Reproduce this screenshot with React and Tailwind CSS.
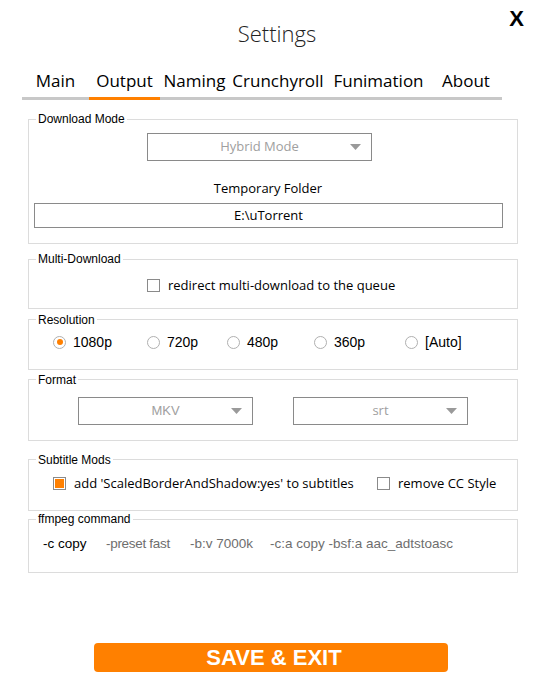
import React, { useState } from 'react';

const segoe = { fontFamily: '"Open Sans", "Noto Sans", sans-serif' };

const tabs = [
    { name: 'Main', w: 'w-[67px]' },
    { name: 'Output', w: 'w-[71px]' },
    { name: 'Naming', w: 'w-[69px]' },
    { name: 'Crunchyroll', w: 'w-[98px]' },
    { name: 'Funimation', w: 'w-[103px]' },
    { name: 'About', w: 'w-[72px]' },
];

function Group({ title, className, children }) {
    return (
        <fieldset className={`mx-[28px] border border-[#dcdcdc] px-0 ${className}`}>
            <legend className="ml-[7px] px-[2px] text-[12px] leading-[14px] text-black font-['Liberation_Sans',sans-serif]">
                {title}
            </legend>
            {children}
        </fieldset>
    );
}

function Select({ value, className, textClass = '' }) {
    return (
        <div className={`relative flex items-center justify-center border border-[#8a8a8a] bg-white ${className}`}>
            <span className={`text-[13px] text-[#a0a0a0] ${textClass}`}>{value}</span>
            <svg className="absolute right-[10px] top-1/2 -translate-y-1/2" width="11" height="6" viewBox="0 0 11 6">
                <path d="M0 0 L11 0 L5.5 6 Z" fill="#9a9a9a" />
            </svg>
        </div>
    );
}

function Radio({ label, checked }) {
    return (
        <div className="flex items-center">
            <span className="flex h-[13px] w-[13px] items-center justify-center rounded-full border border-[#b0b0b0] bg-white">
                {checked && <span className="h-[6px] w-[6px] rounded-full bg-[#ff8000]" />}
            </span>
            <span className="ml-[7px] text-[14px] font-['Liberation_Sans',sans-serif]">{label}</span>
        </div>
    );
}

function Check({ label, checked }) {
    return (
        <div className="flex items-center">
            <span className="flex h-[13px] w-[13px] items-center justify-center border border-[#8a8a8a] bg-white">
                {checked && <span className="h-[9px] w-[9px] bg-[#ff8000]" />}
            </span>
            <span className="ml-[8px] text-[13px]" style={segoe}>{label}</span>
        </div>
    );
}

export default function App() {
    const [active] = useState('Output');

    return (
        <div className="relative h-[693px] w-[546px] bg-white text-black" style={segoe}>
            <button className="absolute right-[22px] top-[6px] text-[22px] font-bold leading-[26px] font-['Liberation_Sans',sans-serif]">
                X
            </button>

            <h1 className="pl-[8px] pt-[18px] text-center text-[22px] font-light leading-[30px] text-[#222]">Settings</h1>

            <div className="ml-[22px] mt-[18px] flex w-[480px] border-b-[3px] border-[#c8c8c8]">
                {tabs.map((t) => (
                    <div
                        key={t.name}
                        className={`${t.w} -mb-[3px] text-center text-[17px] leading-[30px] pb-[1px] ${
                            active === t.name ? 'border-b-[3px] border-[#ff8000]' : ''
                        }`}
                    >
                        {t.name}
                    </div>
                ))}
            </div>

            <Group title="Download Mode" className="mt-[12px] pb-[15px]">
                <Select value="Hybrid Mode" className="ml-[118px] mt-[7px] h-[28px] w-[225px]" />
                <div className="mt-[18px] text-center text-[13px] leading-[18px] pr-[10px]">Temporary Folder</div>
                <div className="ml-[5px] mt-[6px] flex h-[25px] w-[469px] items-center justify-center border border-[#8a8a8a] text-[13px]">
                    E:\uTorrent
                </div>
            </Group>

            <Group title="Multi-Download" className="mt-[8px] pb-[12px]">
                <div className="ml-[118px] mt-[10px]">
                    <Check label="redirect multi-download to the queue" />
                </div>
            </Group>

            <Group title="Resolution" className="mt-[4px] pb-[16px]">
                <div className="mt-[5px] flex items-center">
                    <div className="ml-[24px] w-[94px]"><Radio label="1080p" checked /></div>
                    <div className="w-[80px]"><Radio label="720p" /></div>
                    <div className="w-[87px]"><Radio label="480p" /></div>
                    <div className="w-[91px]"><Radio label="360p" /></div>
                    <Radio label="[Auto]" />
                </div>
            </Group>

            <Group title="Format" className="mt-[3px] pb-[15px]">
                <div className="mt-[10px] flex">
                    <Select value="MKV" className="ml-[49px] h-[28px] w-[175px]" textClass="font-['Liberation_Sans',sans-serif]" />
                    <Select value="srt" className="ml-[40px] h-[28px] w-[175px]" />
                </div>
            </Group>

            <Group title="Subtitle Mods" className="mt-[12px] pb-[17px]">
                <div className="mt-[7px] flex items-center">
                    <div className="ml-[24px] w-[324px]">
                        <Check label="add 'ScaledBorderAndShadow:yes' to subtitles" checked />
                    </div>
                    <Check label="remove CC Style" />
                </div>
            </Group>

            <Group title="ffmpeg command" className="mt-[1px] pb-[18px]">
                <div className="mt-[8px] flex items-center text-[13.5px] font-['Liberation_Sans',sans-serif]">
                    <span className="ml-[14px] w-[63px] text-black">-c copy</span>
                    <span className="w-[84px] text-[#6e6e6e] tracking-[-0.3px]">-preset fast</span>
                    <span className="w-[80px] text-[#6e6e6e]">-b:v 7000k</span>
                    <span className="text-[#6e6e6e]">-c:a copy -bsf:a aac_adtstoasc</span>
                </div>
            </Group>

            <button className="absolute left-[94px] top-[643px] h-[29px] w-[354px] rounded-[4px] bg-[#ff8000] pl-[6px] text-[22px] font-bold leading-[29px] text-white font-['Liberation_Sans',sans-serif]">
                SAVE &amp; EXIT
            </button>
        </div>
    );
}
